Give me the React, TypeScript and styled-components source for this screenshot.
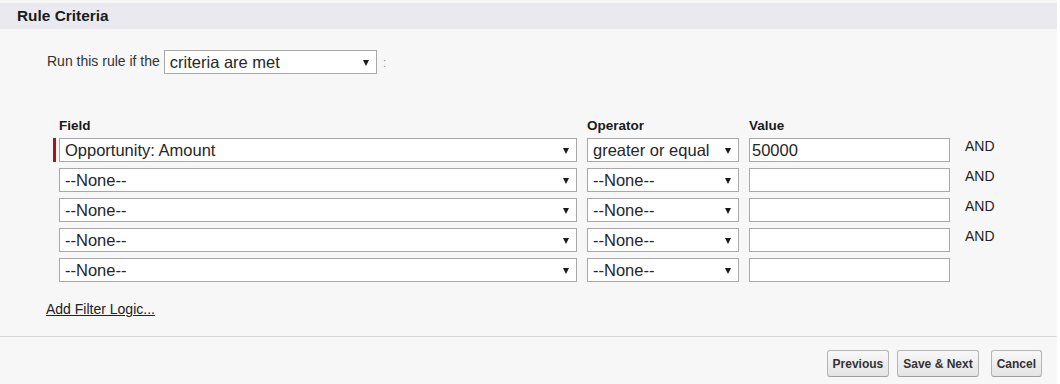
import React from "react";
import styled, { createGlobalStyle } from "styled-components";

const Global = createGlobalStyle`
  html, body { margin: 0; padding: 0; background: #ffffff; }
  body { font-family: "Liberation Sans", Arial, sans-serif; }
`;

const Page = styled.div`
  width: 1060px;
  height: 384px;
  background: #ffffff;
  overflow: hidden;
`;

const Panel = styled.div`
  width: 1057px;
  height: 384px;
  background: #f7f7f7;
  display: flex;
  flex-direction: column;
`;

const Header = styled.div`
  margin-top: 3px;
  height: 26px;
  background: #e9e9ef;
  padding-left: 17px;
  display: flex;
  align-items: center;
  font-weight: bold;
  font-size: 15.4px;
  color: #1a1a1a;
`;

const Body = styled.div`
  padding-left: 47px;
  display: flex;
  flex-direction: column;
`;

const RunRow = styled.div`
  margin-top: 21px;
  display: flex;
  align-items: center;
  gap: 4px;
  height: 24px;
`;

const Label = styled.span`
  font-size: 14px;
  color: #333;
  margin-top: -2px;
`;

const Colon = styled.span`
  font-size: 13px;
  color: #999;
  margin-left: 2px;
`;

const SelectBox = styled.div<{ $w: number }>`
  box-sizing: border-box;
  width: ${(p) => p.$w}px;
  height: 24px;
  border: 1px solid #a8a8a8;
  background: #ffffff;
  display: flex;
  align-items: center;
  justify-content: space-between;
  padding: 0 7px 0 5px;
  font-size: 16.5px;
  color: #262626;
  white-space: nowrap;
`;

const Arrow = styled.span`
  width: 0;
  height: 0;
  border-left: 3px solid transparent;
  border-right: 3px solid transparent;
  border-top: 6px solid #1a1a1a;
  margin-top: 1px;
`;

const Grid = styled.div`
  margin-top: 44px;
  margin-left: 6px;
  display: grid;
  grid-template-columns: 3px 521px 162px 211px auto;
  row-gap: 6px;
  align-items: start;
`;

const ColHead = styled.div<{ $ml?: number }>`
  font-weight: bold;
  font-size: 13.5px;
  color: #1a1a1a;
  height: 16px;
  line-height: 16px;
  margin-bottom: -2px;
  margin-left: ${(p) => p.$ml ?? 0}px;
`;

const Required = styled.div<{ $on: boolean }>`
  width: 3px;
  height: 24px;
  background: ${(p) => (p.$on ? "#a4161a" : "transparent")};
`;

const Cell = styled.div<{ $ml: number }>`
  margin-left: ${(p) => p.$ml}px;
`;

const ValueInput = styled.div`
  box-sizing: border-box;
  width: 201px;
  height: 24px;
  border: 1px solid #a8a8a8;
  background: #ffffff;
  display: flex;
  align-items: center;
  padding-left: 2px;
  font-size: 16.5px;
  color: #262626;
`;

const AndText = styled.div`
  margin-left: 15px;
  font-size: 14px;
  color: #222;
  line-height: 16px;
`;

const LinkRow = styled.div`
  display: flex;
  margin-left: -1px;
`;

const LinkText = styled.a`
  margin-top: 19px;
  font-size: 14px;
  color: #222;
  text-decoration: underline;
  line-height: 16px;
  cursor: pointer;
`;

const Footer = styled.div`
  margin-top: 19px;
  border-top: 1px solid #d6d6d6;
  display: flex;
  justify-content: flex-end;
  padding: 13px 15px 0 0;
`;

const Button = styled.button<{ $ml: number }>`
  box-sizing: border-box;
  height: 27px;
  margin-left: ${(p) => p.$ml}px;
  padding: 0 5px;
  border: 1px solid #b5b5b5;
  border-bottom-color: #9f9f9f;
  border-radius: 3px;
  background: linear-gradient(#f8f8f8, #e4e4e4);
  font-family: "Liberation Sans", Arial, sans-serif;
  font-weight: bold;
  font-size: 12px;
  color: #333;
`;

type Row = { field: string; op: string; value: string; and: boolean; req: boolean };

const rows: Row[] = [
  { field: "Opportunity: Amount", op: "greater or equal", value: "50000", and: true, req: true },
  { field: "--None--", op: "--None--", value: "", and: true, req: false },
  { field: "--None--", op: "--None--", value: "", and: true, req: false },
  { field: "--None--", op: "--None--", value: "", and: true, req: false },
  { field: "--None--", op: "--None--", value: "", and: false, req: false },
];

export default function App() {
  return (
    <Page>
      <Global />
      <Panel>
        <Header>Rule Criteria</Header>
        <Body>
          <RunRow>
            <Label>Run this rule if the</Label>
            <SelectBox $w={213}>
              <span>criteria are met</span>
              <Arrow />
            </SelectBox>
            <Colon>:</Colon>
          </RunRow>
          <Grid>
            <div />
            <ColHead $ml={3}>Field</ColHead>
            <ColHead $ml={10}>Operator</ColHead>
            <ColHead $ml={10}>Value</ColHead>
            <div />
            {rows.map((r, i) => (
              <React.Fragment key={i}>
                <Required $on={r.req} />
                <Cell $ml={3}>
                  <SelectBox $w={518}>
                    <span>{r.field}</span>
                    <Arrow />
                  </SelectBox>
                </Cell>
                <Cell $ml={10}>
                  <SelectBox $w={152}>
                    <span>{r.op}</span>
                    <Arrow />
                  </SelectBox>
                </Cell>
                <Cell $ml={10}>
                  <ValueInput>{r.value}</ValueInput>
                </Cell>
                <AndText>{r.and ? "AND" : ""}</AndText>
              </React.Fragment>
            ))}
          </Grid>
          <LinkRow>
            <LinkText>Add Filter Logic...</LinkText>
          </LinkRow>
        </Body>
        <Footer>
          <Button $ml={0}>Previous</Button>
          <Button $ml={8}>Save &amp; Next</Button>
          <Button $ml={12}>Cancel</Button>
        </Footer>
      </Panel>
    </Page>
  );
}
